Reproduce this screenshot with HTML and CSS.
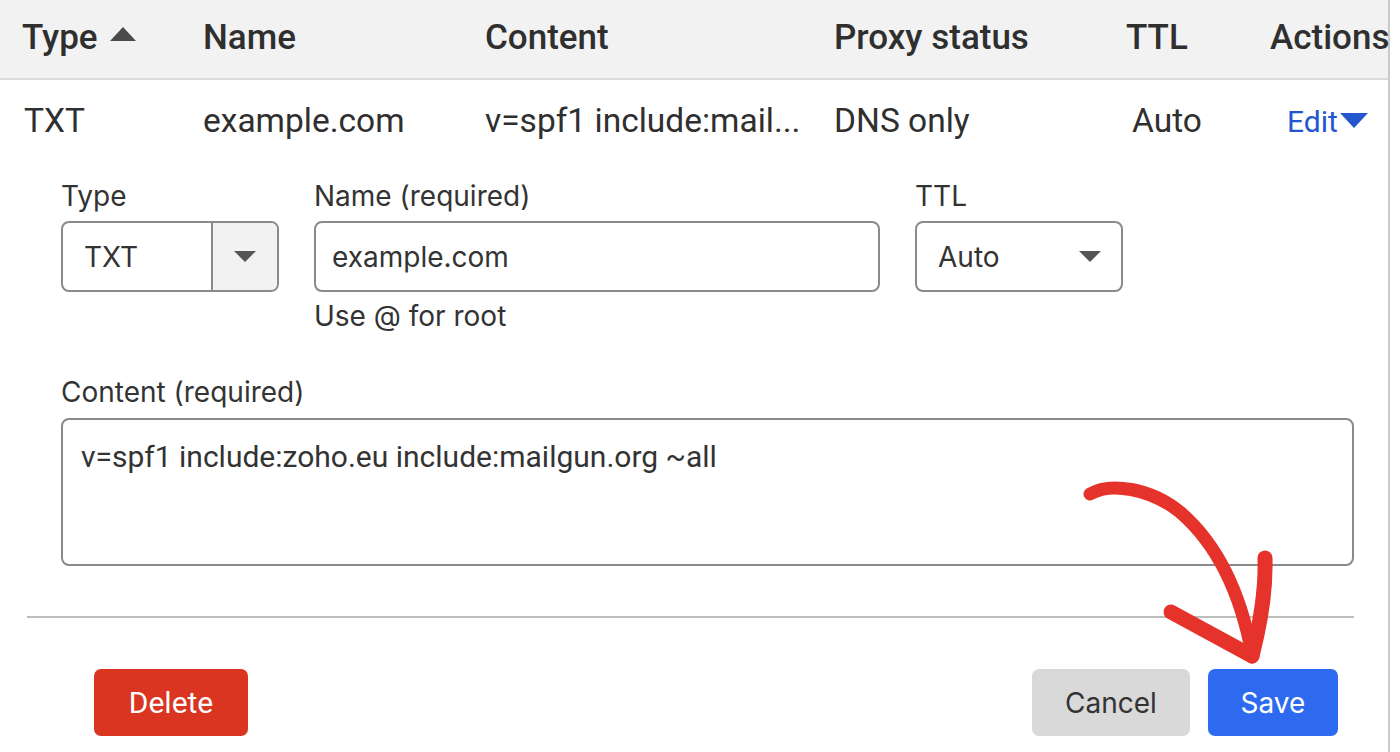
FILE: index.html
```html
<!DOCTYPE html>
<html>
<head>
    <title>DNS record</title>
    <meta name="viewport" content="width=device-width, initial-scale=1.0">
    <link rel="stylesheet" href="styles.css">
</head>
<body>
    <div class="page">
        <div class="table-head">
            <div class="col">Type <span class="sort-up"></span></div>
            <div class="col">Name</div>
            <div class="col">Content</div>
            <div class="col">Proxy status</div>
            <div class="col">TTL</div>
            <div class="col">Actions</div>
        </div>

        <div class="table-row">
            <div class="cell">TXT</div>
            <div class="cell">example.com</div>
            <div class="cell">v=spf1 include:mail...</div>
            <div class="cell">DNS only</div>
            <div class="cell ttl-cell">Auto</div>
            <div class="cell edit-cell"><a class="edit-link">Edit<span class="caret-down"></span></a></div>
        </div>

        <div class="edit-form">
            <div class="field-row">
                <div class="field type-field">
                    <label>Type</label>
                    <div class="split-select">
                        <span class="value">TXT</span>
                        <span class="toggle"><span class="arrow"></span></span>
                    </div>
                </div>
                <div class="field name-field">
                    <label>Name (required)</label>
                    <div class="input">example.com</div>
                    <div class="hint">Use @ for root</div>
                </div>
                <div class="field ttl-field">
                    <label>TTL</label>
                    <div class="select">
                        <span class="value">Auto</span>
                        <span class="arrow"></span>
                    </div>
                </div>
            </div>

            <div class="field content-field">
                <label>Content (required)</label>
                <div class="textarea">v=spf1 include:zoho.eu include:mailgun.org ~all</div>
            </div>

            <hr class="divider">

            <div class="actions">
                <button class="btn btn-delete">Delete</button>
                <div class="actions-right">
                    <button class="btn btn-cancel">Cancel</button>
                    <button class="btn btn-save">Save</button>
                </div>
            </div>
        </div>
    </div>

    <!-- hand drawn arrow pointing at Save -->
    <svg class="scribble" width="1400" height="752" viewBox="0 0 1400 752">
        <path d="M1090 494 C1110 482 1150 488 1180 512 C1215 542 1240 590 1252 654"
              fill="none" stroke="#e5322b" stroke-width="13" stroke-linecap="round"/>
        <path d="M1171 612 L1252 656" fill="none" stroke="#e5322b" stroke-width="15" stroke-linecap="round"/>
        <path d="M1265 558 C1266 590 1260 625 1252 656" fill="none" stroke="#e5322b" stroke-width="15" stroke-linecap="round"/>
    </svg>
</body>
</html>
```

FILE: styles.css
```css
body {
    margin: 0;
    background-color: white;
    font-family: Roboto, "Liberation Sans", Arial, sans-serif;
    color: #333;
    overflow: hidden;
}

.page {
    width: 1388px;
    height: 752px;
    border-right: 2px solid #c9c9c9;
    position: relative;
}

.table-head,
.table-row {
    display: grid;
    grid-template-columns: 181px 282px 349px 292px 144px 1fr;
    align-items: center;
    padding-left: 22px;
}

.table-head {
    height: 78px;
    background-color: #f2f2f2;
    border-bottom: 2px solid #dcdcdc;
    font-size: 35px;
    font-weight: 500;
    color: #2f2f2f;
    white-space: nowrap;
}

.table-head .col {
    margin-top: -4px;
}

.sort-up {
    display: inline-block;
    width: 0;
    height: 0;
    border-left: 13px solid transparent;
    border-right: 13px solid transparent;
    border-bottom: 14px solid #4a4a4a;
    margin-left: 4px;
    vertical-align: 8px;
}

.table-row {
    height: 80px;
    font-size: 33.5px;
    color: #2f2f2f;
    white-space: nowrap;
}

.table-row .cell:first-child {
    padding-left: 2px;
}

.ttl-cell {
    padding-left: 6px;
}

.edit-cell {
    padding-left: 17px;
}

.edit-link {
    color: #2457cf;
    font-size: 30px;
}

.caret-down {
    display: inline-block;
    width: 0;
    height: 0;
    border-left: 14px solid transparent;
    border-right: 14px solid transparent;
    border-top: 15px solid #2457cf;
    margin-left: 2px;
    vertical-align: 4px;
}

.edit-form {
    padding: 0 34px 0 61px;
    font-family: Inter, "Liberation Sans", Arial, sans-serif;
    font-size: 28px;
    color: #333;
}

.field-row {
    display: flex;
    gap: 35px;
    padding-top: 17px;
}

.field label {
    display: block;
    height: 44px;
    line-height: 38px;
    color: #333;
}

.split-select,
.input,
.select,
.textarea {
    box-sizing: border-box;
    border: 2px solid #8a8a8a;
    border-radius: 8px;
    background-color: white;
}

.type-field {
    width: 218px;
}

.split-select {
    display: flex;
    height: 71px;
    overflow: hidden;
}

.split-select .value {
    flex: 1;
    display: flex;
    align-items: center;
    padding-left: 21px;
}

.split-select .toggle {
    width: 64px;
    border-left: 2px solid #8a8a8a;
    background-color: #f2f2f2;
    display: flex;
    align-items: center;
    justify-content: center;
}

.arrow {
    display: inline-block;
    width: 0;
    height: 0;
    border-left: 11px solid transparent;
    border-right: 11px solid transparent;
    border-top: 11px solid #555;
}

.name-field {
    width: 566px;
}

.input {
    height: 71px;
    display: flex;
    align-items: center;
    padding-left: 16px;
}

.hint {
    margin-top: 7px;
    line-height: 34px;
}

.ttl-field {
    width: 208px;
}

.select {
    height: 71px;
    display: flex;
    align-items: center;
    justify-content: space-between;
    padding: 0 20px 0 21px;
}

.content-field {
    margin-top: 42px;
}

.content-field label {
    height: auto;
    line-height: 34px;
    margin-bottom: 9px;
}

.textarea {
    height: 148px;
    padding: 19px 18px;
    font-family: Roboto, "Liberation Sans", Arial, sans-serif;
    font-size: 30px;
    line-height: 36px;
}

.divider {
    border: none;
    border-top: 2px solid #bdbdbd;
    margin: 50px 0 0 -34px;
}

.actions {
    display: flex;
    justify-content: space-between;
    padding: 51px 16px 0 33px;
}

.actions-right {
    display: flex;
    gap: 18px;
}

.btn {
    height: 67px;
    border: none;
    border-radius: 7px;
    font-family: Inter, "Liberation Sans", Arial, sans-serif;
    font-size: 28px;
    cursor: pointer;
}

.btn-delete {
    width: 154px;
    background-color: #d93520;
    color: white;
    font-family: Roboto, "Liberation Sans", Arial, sans-serif;
    font-size: 30px;
}

.btn-cancel {
    width: 158px;
    background-color: #d9d9d9;
    color: #333;
}

.btn-save {
    width: 130px;
    background-color: #2d6af0;
    color: white;
}

.scribble {
    position: absolute;
    left: 0;
    top: 0;
    pointer-events: none;
}
```
